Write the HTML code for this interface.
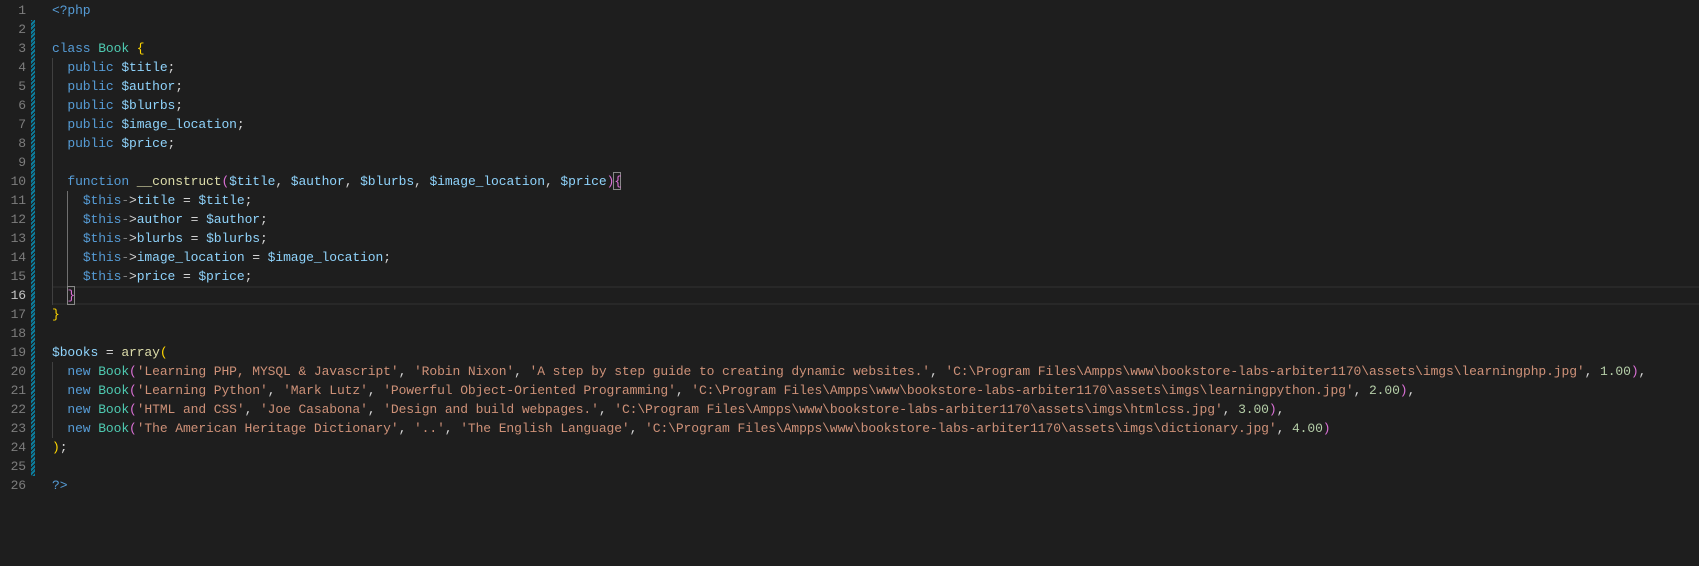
<!DOCTYPE html>
<html><head><meta charset="utf-8"><style>
html,body{margin:0;padding:0;background:#1e1e1e;width:1699px;height:566px;overflow:hidden}
body{position:relative;font-family:"Liberation Mono",monospace;font-size:13px;color:#d4d4d4}
.l{position:absolute;left:52px;height:19px;line-height:19px;white-space:pre;letter-spacing:-.1px}
.n{position:absolute;left:0;width:26px;height:19px;line-height:19px;text-align:right;color:#7d7d7d;letter-spacing:-.1px}
.a{position:absolute}
.k{color:#569cd6}.c{color:#4ec9b0}.v{color:#8fd3fb}.s{color:#ce9178}.f{color:#dcdcaa}.d{color:#b5cea8}.g{color:#ffd700}.p{color:#da70d6}.o{color:#808080}.t{color:#569cd6}
</style></head><body>
<div class="a" style="top:286px;height:19px;box-sizing:border-box;border:2px solid #282828;border-left:0;border-right:0;left:52px;width:1647px"></div>
<div class="a" style="left:31px;top:20px;width:4px;height:456px;background:repeating-linear-gradient(-45deg,#0c7d9d 0,#0c7d9d 2px,#1e1e1e 2px,#1e1e1e 3px)"></div>
<div class="a" style="left:52px;top:58px;width:1px;height:247px;background:#404040"></div>
<div class="a" style="left:67px;top:191px;width:1px;height:95px;background:#707070"></div>
<div class="a" style="left:52px;top:362px;width:1px;height:76px;background:#404040"></div>
<div class="a" style="left:613px;top:172px;width:8px;height:18px;box-sizing:border-box;border:1px solid #888"></div>
<div class="a" style="left:67px;top:286px;width:8px;height:19px;box-sizing:border-box;border:1px solid #888"></div>

<div class="n" style="top:1px">1</div>
<div class="n" style="top:20px">2</div>
<div class="n" style="top:39px">3</div>
<div class="n" style="top:58px">4</div>
<div class="n" style="top:77px">5</div>
<div class="n" style="top:96px">6</div>
<div class="n" style="top:115px">7</div>
<div class="n" style="top:134px">8</div>
<div class="n" style="top:153px">9</div>
<div class="n" style="top:172px">10</div>
<div class="n" style="top:191px">11</div>
<div class="n" style="top:210px">12</div>
<div class="n" style="top:229px">13</div>
<div class="n" style="top:248px">14</div>
<div class="n" style="top:267px">15</div>
<div class="n" style="top:286px;color:#c6c6c6">16</div>
<div class="n" style="top:305px">17</div>
<div class="n" style="top:324px">18</div>
<div class="n" style="top:343px">19</div>
<div class="n" style="top:362px">20</div>
<div class="n" style="top:381px">21</div>
<div class="n" style="top:400px">22</div>
<div class="n" style="top:419px">23</div>
<div class="n" style="top:438px">24</div>
<div class="n" style="top:457px">25</div>
<div class="n" style="top:476px">26</div>

<div class="l" style="top:1px"><span class="k">&lt;?php</span></div>
<div class="l" style="top:39px"><span class="k">class</span> <span class="c">Book</span> <span class="g">{</span></div>
<div class="l" style="top:58px">  <span class="k">public</span> <span class="v">$title</span>;</div>
<div class="l" style="top:77px">  <span class="k">public</span> <span class="v">$author</span>;</div>
<div class="l" style="top:96px">  <span class="k">public</span> <span class="v">$blurbs</span>;</div>
<div class="l" style="top:115px">  <span class="k">public</span> <span class="v">$image_location</span>;</div>
<div class="l" style="top:134px">  <span class="k">public</span> <span class="v">$price</span>;</div>
<div class="l" style="top:172px">  <span class="k">function</span> <span class="f">__construct</span><span class="p">(</span><span class="v">$title</span>, <span class="v">$author</span>, <span class="v">$blurbs</span>, <span class="v">$image_location</span>, <span class="v">$price</span><span class="p">){</span></div>
<div class="l" style="top:191px">    <span class="t">$this</span><span class="o">-</span>&gt;<span class="v">title</span> = <span class="v">$title</span>;</div>
<div class="l" style="top:210px">    <span class="t">$this</span><span class="o">-</span>&gt;<span class="v">author</span> = <span class="v">$author</span>;</div>
<div class="l" style="top:229px">    <span class="t">$this</span><span class="o">-</span>&gt;<span class="v">blurbs</span> = <span class="v">$blurbs</span>;</div>
<div class="l" style="top:248px">    <span class="t">$this</span><span class="o">-</span>&gt;<span class="v">image_location</span> = <span class="v">$image_location</span>;</div>
<div class="l" style="top:267px">    <span class="t">$this</span><span class="o">-</span>&gt;<span class="v">price</span> = <span class="v">$price</span>;</div>
<div class="l" style="top:286px">  <span class="p">}</span></div>
<div class="l" style="top:305px"><span class="g">}</span></div>
<div class="l" style="top:343px"><span class="v">$books</span> = <span class="f">array</span><span class="g">(</span></div>
<div class="l" style="top:362px">  <span class="k">new</span> <span class="c">Book</span><span class="p">(</span><span class="s">'Learning PHP, MYSQL &amp; Javascript'</span>, <span class="s">'Robin Nixon'</span>, <span class="s">'A step by step guide to creating dynamic websites.'</span>, <span class="s">'C:\Program Files\Ampps\www\bookstore-labs-arbiter1170\assets\imgs\learningphp.jpg'</span>, <span class="d">1.00</span><span class="p">)</span>,</div>
<div class="l" style="top:381px">  <span class="k">new</span> <span class="c">Book</span><span class="p">(</span><span class="s">'Learning Python'</span>, <span class="s">'Mark Lutz'</span>, <span class="s">'Powerful Object-Oriented Programming'</span>, <span class="s">'C:\Program Files\Ampps\www\bookstore-labs-arbiter1170\assets\imgs\learningpython.jpg'</span>, <span class="d">2.00</span><span class="p">)</span>,</div>
<div class="l" style="top:400px">  <span class="k">new</span> <span class="c">Book</span><span class="p">(</span><span class="s">'HTML and CSS'</span>, <span class="s">'Joe Casabona'</span>, <span class="s">'Design and build webpages.'</span>, <span class="s">'C:\Program Files\Ampps\www\bookstore-labs-arbiter1170\assets\imgs\htmlcss.jpg'</span>, <span class="d">3.00</span><span class="p">)</span>,</div>
<div class="l" style="top:419px">  <span class="k">new</span> <span class="c">Book</span><span class="p">(</span><span class="s">'The American Heritage Dictionary'</span>, <span class="s">'..'</span>, <span class="s">'The English Language'</span>, <span class="s">'C:\Program Files\Ampps\www\bookstore-labs-arbiter1170\assets\imgs\dictionary.jpg'</span>, <span class="d">4.00</span><span class="p">)</span></div>
<div class="l" style="top:438px"><span class="g">)</span>;</div>
<div class="l" style="top:476px"><span class="k">?&gt;</span></div>
</body></html>
